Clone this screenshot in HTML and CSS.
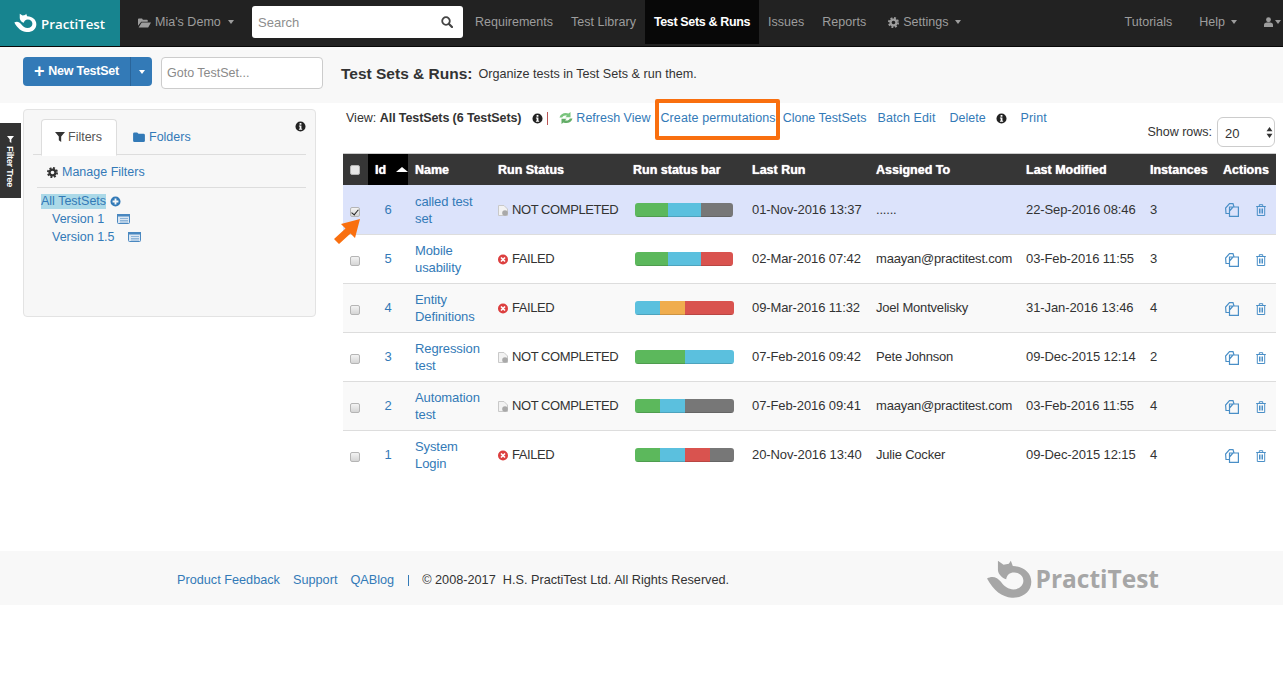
FILE: index.html
```html
<!DOCTYPE html>
<html lang="en">
<head>
<meta charset="utf-8">
<title>Test Sets &amp; Runs</title>
<link rel="stylesheet" href="styles.css">
</head>
<body>
<svg class="defs" aria-hidden="true">
  <symbol id="i-logo" viewBox="78 42 140 118"><path fill="currentColor" fill-rule="evenodd" d="M113 44 L130 56 L146 53 L152 44 L158 60 C192 62 214 82 214 108 C214 138 188 158 155 156 C125 154 100 135 80 98 C96 88 112 95 122 108 C132 122 145 131 160 131 C178 131 190 119 190 105 C190 90 178 80 162 80 C148 80 140 88 138 100 C126 96 114 86 113 72 Z"/></symbol>
  <symbol id="i-folder-open" viewBox="0 0 16 12"><path fill="currentColor" d="M0 2 a1 1 0 0 1 1-1 h4 l1 1.500 h5 a1 1 0 0 1 1 1 V5 H4 L0 10 Z M4.500 6 H16 L12.500 12 H.8 Z"/></symbol>
  <symbol id="i-folder" viewBox="0 0 13 11"><path fill="currentColor" d="M0 2 a1.500 1.500 0 0 1 1.500-1.500 h3 l1.500 1.500 h5.500 a1.500 1.500 0 0 1 1.500 1.500 v6 a1.500 1.500 0 0 1-1.500 1.500 h-10 a1.500 1.500 0 0 1-1.500-1.500 Z"/></symbol>
  <symbol id="i-search" viewBox="0 0 12 12"><circle cx="5" cy="5" r="3.800" fill="none" stroke="currentColor" stroke-width="1.800"/><path d="M8 8 L11 11" stroke="currentColor" stroke-width="2.200" stroke-linecap="round"/></symbol>
  <symbol id="i-gear" viewBox="0 0 12 12"><circle cx="6" cy="6" r="3.200" fill="none" stroke="currentColor" stroke-width="2.400"/><circle cx="6" cy="6" r="5" fill="none" stroke="currentColor" stroke-width="2" stroke-dasharray="2.100 1.827"/></symbol>
  <symbol id="i-funnel" viewBox="0 0 11 11"><path fill="currentColor" d="M0 0 H11 L6.800 5 V11 L4.200 9 V5 Z"/></symbol>
  <symbol id="i-info" viewBox="0 0 12 12"><path fill="currentColor" fill-rule="evenodd" d="M6 .5 a5.500 5.500 0 1 0 0 11 a5.500 5.500 0 1 0 0-11 Z M5 2.300 h2 v1.700 h-2 Z M4.300 5 h2.700 v3.400 h.8 v1.100 h-3.500 v-1.100 h.8 v-2.300 h-.8 Z"/></symbol>
  <symbol id="i-plus-circle" viewBox="0 0 12 12"><path fill="currentColor" fill-rule="evenodd" d="M6 .5 a5.500 5.500 0 1 0 0 11 a5.500 5.500 0 1 0 0-11 Z M5 2.800 h2 v2.200 h2.200 v2 h-2.200 v2.200 h-2 v-2.200 h-2.200 v-2 h2.200 Z"/></symbol>
  <symbol id="i-user" viewBox="0 0 10 12"><circle cx="5" cy="3" r="2.700" fill="currentColor"/><path fill="currentColor" d="M0 11 V8.500 C0 7 1.500 6.300 3 6 H7 C8.500 6.300 10 7 10 8.500 V11 Z"/></symbol>
  <symbol id="i-list" viewBox="0 0 13 10"><rect x=".5" y=".5" width="12" height="9" rx="1" fill="#dbe7f3" stroke="currentColor"/><rect x="0" y="0" width="13" height="2.500" fill="currentColor"/><path d="M3 4.500 H11 M3 6.500 H11 M3 8 H11" stroke="#8db4d8"/></symbol>
  <symbol id="i-refresh" viewBox="0 0 14 12"><path fill="#79c47d" d="M.5 5.500 C1.500 1.500 6 0 9.500 1.500 L11.500 0 V5.200 H6.300 L8 3.800 C6 3 4 3.500 3.200 5.500 Z"/><path fill="#63ad67" d="M13.500 6.500 C12.500 10.500 8 12 4.500 10.500 L2.500 12 V6.800 H7.700 L6 8.200 C8 9 10 8.500 10.800 6.500 Z"/></symbol>
  <symbol id="i-doc" viewBox="0 0 10 11"><path d="M.5 .5 H6 L9.500 4 V10.500 H.5 Z" fill="#f2f2f2" stroke="#c9c9c9"/><circle cx="7" cy="8" r="2.800" fill="#a9a9a9"/></symbol>
  <symbol id="i-fail" viewBox="0 0 10 10"><circle cx="5" cy="5" r="5" fill="#dc3f3f"/><path d="M3 3 L7 7 M7 3 L3 7" stroke="#fff" stroke-width="1.700"/></symbol>
  <symbol id="i-copy" viewBox="0 0 14 14"><path fill="none" stroke="currentColor" stroke-width="1.200" d="M4.500 10.500 H1 L.6 5 L4.500 .6 H8 L9 4 M4.500 13.400 V4 H13.400 V13.400 Z M4.500 8 L8 4"/></symbol>
  <symbol id="i-trash" viewBox="0 0 10 12"><path fill="none" stroke="currentColor" d="M.2 2.500 H9.800 M3.300 2.500 V.7 H6.700 V2.500 M1.300 2.500 V11.500 H8.700 V2.500 M3.500 4.500 V9.500 M5 4.500 V9.500 M6.500 4.500 V9.500"/></symbol>
  <symbol id="i-arrow" viewBox="0 0 26 25"><path fill="#f96f0f" d="M26 0 L21 19 L16.500 14.500 L5 25 L0 20 L11.500 9.500 L7 5 Z"/></symbol>
  <symbol id="i-updown" viewBox="0 0 7 13"><path fill="#333" d="M3.500 0 L7 5 H0 Z M0 8 H7 L3.500 13 Z"/></symbol>
</svg>

<header class="topnav">
  <a class="brand"><svg class="brand-mark"><use href="#i-logo"/></svg><span class="brand-text">PractiTest</span></a>
  <a class="nav-link project"><svg class="ic ic-fold"><use href="#i-folder-open"/></svg>Mia's Demo<span class="caret"></span></a>
  <div class="nav-search"><span class="search-ph">Search</span><svg class="ic ic-search"><use href="#i-search"/></svg></div>
  <nav class="nav-main">
    <a class="nav-link">Requirements</a>
    <a class="nav-link">Test Library</a>
    <a class="nav-link active">Test Sets &amp; Runs</a>
    <a class="nav-link">Issues</a>
    <a class="nav-link">Reports</a>
    <a class="nav-link settings"><svg class="ic ic-gear"><use href="#i-gear"/></svg>Settings<span class="caret"></span></a>
  </nav>
  <nav class="nav-right">
    <a class="nav-link">Tutorials</a>
    <a class="nav-link help">Help<span class="caret"></span></a>
    <a class="nav-link user"><svg class="ic ic-user"><use href="#i-user"/></svg><span class="caret"></span></a>
  </nav>
</header>

<section class="subbar">
  <div class="btn-group">
    <a class="btn-main"><span class="btn-plus">+</span>New TestSet</a>
    <a class="btn-drop"><span class="caret"></span></a>
  </div>
  <div class="goto">Goto TestSet...</div>
  <h1 class="page-title">Test Sets &amp; Runs:</h1>
  <p class="page-sub">Organize tests in Test Sets &amp; run them.</p>
</section>

<aside class="filter-tab"><svg class="ic ic-tabfunnel"><use href="#i-funnel"/></svg><span class="filter-tab-text">Filter Tree</span></aside>

<main class="main">
  <aside class="sidebar">
    <svg class="ic ic-info side-info"><use href="#i-info"/></svg>
    <div class="tabs">
      <a class="tab tab-active"><svg class="ic ic-funnel"><use href="#i-funnel"/></svg>Filters</a>
      <a class="tab"><svg class="ic ic-folder"><use href="#i-folder"/></svg>Folders</a>
    </div>
    <div class="manage"><svg class="ic ic-managegear"><use href="#i-gear"/></svg><a class="link">Manage Filters</a></div>
    <ul class="tree">
      <li class="tree-root"><a class="link tree-sel">All TestSets</a><svg class="ic ic-plus"><use href="#i-plus-circle"/></svg></li>
      <li class="tree-item"><a class="link">Version 1</a><svg class="ic ic-list"><use href="#i-list"/></svg></li>
      <li class="tree-item"><a class="link">Version 1.5</a><svg class="ic ic-list"><use href="#i-list"/></svg></li>
    </ul>
  </aside>

  <section class="content">
    <div class="toolbar">
      <div class="actions">
        <span class="view">View: <b>All TestSets (6 TestSets)</b></span>
        <svg class="ic ic-info view-info"><use href="#i-info"/></svg>
        <span class="pipe"></span>
        <svg class="ic ic-refresh"><use href="#i-refresh"/></svg>
        <a class="link refresh">Refresh View</a>
        <a class="link perm">Create permutations</a>
        <a class="link clone">Clone TestSets</a>
        <a class="link batch">Batch Edit</a>
        <a class="link del">Delete</a>
        <svg class="ic ic-info del-info"><use href="#i-info"/></svg>
        <a class="link print">Print</a>
      </div>
      <div class="rows">
        <span>Show rows:</span>
        <div class="rows-select">20<svg class="ic ic-updown"><use href="#i-updown"/></svg></div>
      </div>
    </div>

    <table class="grid">
      <colgroup>
        <col class="c-check"><col class="c-id"><col class="c-name"><col class="c-status"><col class="c-bar"><col class="c-run"><col class="c-assign"><col class="c-mod"><col class="c-inst"><col class="c-act">
      </colgroup>
      <thead>
        <tr>
          <th class="cell-check"><input class="check" type="checkbox"></th>
          <th class="th-sort">Id<span class="sort-up"></span></th>
          <th>Name</th><th>Run Status</th><th>Run status bar</th><th>Last Run</th><th>Assigned To</th><th>Last Modified</th><th>Instances</th><th>Actions</th>
        </tr>
      </thead>
      <tbody>
        <tr class="selected">
          <td class="cell-check"><input class="check" type="checkbox" checked><svg class="row-arrow"><use href="#i-arrow"/></svg></td>
          <td class="cell-id"><a class="link">6</a></td>
          <td class="cell-name"><a class="link">called test<br>set</a></td>
          <td><svg class="ic ic-status"><use href="#i-doc"/></svg><span class="st">NOT COMPLETED</span></td>
          <td><div class="bar w98"><i class="g s33"></i><i class="b s33"></i><i class="k s32"></i></div></td>
          <td>01-Nov-2016 13:37</td><td class="assignee">......</td><td>22-Sep-2016 08:46</td><td>3</td>
          <td class="cell-act"><svg class="ic ic-copy"><use href="#i-copy"/></svg><svg class="ic ic-trash"><use href="#i-trash"/></svg></td>
        </tr>
        <tr>
          <td class="cell-check"><input class="check" type="checkbox"></td>
          <td class="cell-id"><a class="link">5</a></td>
          <td class="cell-name"><a class="link">Mobile<br>usability</a></td>
          <td><svg class="ic ic-status"><use href="#i-fail"/></svg><span class="st">FAILED</span></td>
          <td><div class="bar w98"><i class="g s33"></i><i class="b s33"></i><i class="r s32"></i></div></td>
          <td>02-Mar-2016 07:42</td><td class="assignee">maayan@practitest.com</td><td>03-Feb-2016 11:55</td><td>3</td>
          <td class="cell-act"><svg class="ic ic-copy"><use href="#i-copy"/></svg><svg class="ic ic-trash"><use href="#i-trash"/></svg></td>
        </tr>
        <tr class="alt">
          <td class="cell-check"><input class="check" type="checkbox"></td>
          <td class="cell-id"><a class="link">4</a></td>
          <td class="cell-name"><a class="link">Entity<br>Definitions</a></td>
          <td><svg class="ic ic-status"><use href="#i-fail"/></svg><span class="st">FAILED</span></td>
          <td><div class="bar"><i class="b s25"></i><i class="o s25"></i><i class="r s49"></i></div></td>
          <td>09-Mar-2016 11:32</td><td class="assignee">Joel Montvelisky</td><td>31-Jan-2016 13:46</td><td>4</td>
          <td class="cell-act"><svg class="ic ic-copy"><use href="#i-copy"/></svg><svg class="ic ic-trash"><use href="#i-trash"/></svg></td>
        </tr>
        <tr>
          <td class="cell-check"><input class="check" type="checkbox"></td>
          <td class="cell-id"><a class="link">3</a></td>
          <td class="cell-name"><a class="link">Regression<br>test</a></td>
          <td><svg class="ic ic-status"><use href="#i-doc"/></svg><span class="st">NOT COMPLETED</span></td>
          <td><div class="bar"><i class="g s50"></i><i class="b s49"></i></div></td>
          <td>07-Feb-2016 09:42</td><td class="assignee">Pete Johnson</td><td>09-Dec-2015 12:14</td><td>2</td>
          <td class="cell-act"><svg class="ic ic-copy"><use href="#i-copy"/></svg><svg class="ic ic-trash"><use href="#i-trash"/></svg></td>
        </tr>
        <tr class="alt">
          <td class="cell-check"><input class="check" type="checkbox"></td>
          <td class="cell-id"><a class="link">2</a></td>
          <td class="cell-name"><a class="link">Automation<br>test</a></td>
          <td><svg class="ic ic-status"><use href="#i-doc"/></svg><span class="st">NOT COMPLETED</span></td>
          <td><div class="bar"><i class="g s25"></i><i class="b s25"></i><i class="k s49"></i></div></td>
          <td>07-Feb-2016 09:41</td><td class="assignee">maayan@practitest.com</td><td>03-Feb-2016 11:55</td><td>4</td>
          <td class="cell-act"><svg class="ic ic-copy"><use href="#i-copy"/></svg><svg class="ic ic-trash"><use href="#i-trash"/></svg></td>
        </tr>
        <tr>
          <td class="cell-check"><input class="check" type="checkbox"></td>
          <td class="cell-id"><a class="link">1</a></td>
          <td class="cell-name"><a class="link">System<br>Login</a></td>
          <td><svg class="ic ic-status"><use href="#i-fail"/></svg><span class="st">FAILED</span></td>
          <td><div class="bar"><i class="g s25"></i><i class="b s25"></i><i class="r s25"></i><i class="k s24"></i></div></td>
          <td>20-Nov-2016 13:40</td><td class="assignee">Julie Cocker</td><td>09-Dec-2015 12:15</td><td>4</td>
          <td class="cell-act"><svg class="ic ic-copy"><use href="#i-copy"/></svg><svg class="ic ic-trash"><use href="#i-trash"/></svg></td>
        </tr>
      </tbody>
    </table>
  </section>
</main>

<footer class="footer">
  <a class="link foot-link">Product Feedback</a>
  <a class="link foot-link">Support</a>
  <a class="link foot-link">QABlog</a>
  <span class="foot-sep"></span>
  <span class="foot-copy">© 2008-2017&nbsp; H.S. PractiTest Ltd. All Rights Reserved.</span>
  <div class="foot-logo"><svg class="foot-mark"><use href="#i-logo"/></svg><span class="foot-text">PractiTest</span></div>
</footer>
</body>
</html>
```

FILE: styles.css
```css
* { box-sizing: border-box; }
html, body { margin: 0; padding: 0; }
body {
  background: #fff;
  color: #333;
  font: 13px/17px "Liberation Sans", Arial, sans-serif;
  position: relative;
}
a { text-decoration: none; }
ul { list-style: none; margin: 0; padding: 0; }
h1, p { margin: 0; }
.defs { position: absolute; width: 0; height: 0; overflow: hidden; }
.ic { display: inline-block; flex: none; }
.link { color: #337ab7; }

.caret {
  display: inline-block;
  width: 0; height: 0;
  margin-left: 6px;
  vertical-align: middle;
  border-top: 4px solid currentColor;
  border-left: 3.500px solid transparent;
  border-right: 3.500px solid transparent;
}

/* top navigation */
.topnav {
  display: flex;
  align-items: stretch;
  height: 47px;
  background: #222;
  border-bottom: 1px solid #080808;
}
.brand {
  display: flex;
  align-items: center;
  width: 120px;
  padding-left: 14px;
  background: #17848f;
  color: #fff;
}
.brand-mark { width: 23px; height: 20px; color: #fff; }
.brand-text { margin-left: 4px; padding-top: 1px; font: 600 13.300px/20px "Open Sans", sans-serif; }
.nav-link {
  display: flex;
  align-items: center;
  height: 44px;
  padding: 0 9px;
  color: #9d9d9d;
  font-size: 12.500px;
  letter-spacing: .02px;
  white-space: nowrap;
}
.nav-link.active { background: #080808; color: #fff; font-weight: 700; letter-spacing: -.36px; }
.project { margin-left: 9px; width: 123px; }
.project .caret { margin-left: 7px; }
.ic-fold { width: 13px; height: 11px; margin-right: 4px; color: #9d9d9d; }
.nav-search {
  display: flex;
  align-items: center;
  justify-content: space-between;
  width: 211px;
  height: 32px;
  margin-top: 6px;
  padding: 0 10px 0 6px;
  background: #fff;
  border-radius: 3px;
  color: #8d8d8d;
}
.ic-search { width: 12px; height: 12px; color: #444; }
.nav-main { display: flex; margin-left: 3px; }
.settings { margin-left: 4px; }
.ic-gear { width: 11px; height: 11px; margin-right: 4px; }
.nav-right { display: flex; margin-left: auto; }
.help { margin-left: 9px; padding-right: 10px; }
.user { margin-left: 8px; padding-right: 0; width: 28px; }
.ic-user { width: 9px; height: 11px; color: #9d9d9d; }
.user .caret { margin-left: 2px; }

/* sub bar */
.subbar {
  display: flex;
  align-items: flex-start;
  height: 56px;
  padding: 10px 0 0 23px;
  background: #f8f8f8;
}
.btn-group { display: flex; height: 29px; }
.btn-main {
  display: flex;
  align-items: center;
  width: 107px;
  padding-left: 11px;
  background: #337ab7;
  color: #fff;
  border-radius: 4px 0 0 4px;
  white-space: nowrap;
  font-weight: 700;
  letter-spacing: -.25px;
  font-size: 12.500px;
}
.btn-plus { font-size: 18px; margin-right: 4px; }
.btn-drop {
  display: flex;
  align-items: center;
  justify-content: center;
  width: 22px;
  background: #337ab7;
  color: #fff;
  border-left: 1px solid #2a659a;
  border-radius: 0 4px 4px 0;
}
.btn-drop .caret { margin-left: 0; }
.goto {
  width: 162px;
  height: 32px;
  margin-left: 9px;
  padding: 7px 5px;
  background: #fff;
  border: 1px solid #ccc;
  border-radius: 4px;
  color: #8a8a8a;
  font-size: 12.500px;
}
.page-title { margin: 8px 0 0 18px; font-size: 15.500px; line-height: 18px; font-weight: 700; color: #333; }
.page-sub { margin: 9px 0 0 6px; font-size: 12.600px; }

/* left tab */
.filter-tab {
  position: absolute;
  left: 0;
  top: 123px;
  display: flex;
  flex-direction: column;
  align-items: center;
  width: 21px;
  height: 75px;
  padding-top: 13px;
  background: #333;
  color: #fff;
}
.ic-tabfunnel { width: 9px; height: 7px; }
.filter-tab-text {
  writing-mode: vertical-rl;
  font-size: 9.500px;
  line-height: 11px;
  font-weight: 700;
  margin-top: 3px;
  letter-spacing: -.4px;
}

/* main */
.main { display: flex; align-items: flex-start; padding-left: 23px; }
.sidebar {
  position: relative;
  width: 293px;
  height: 208px;
  margin-top: 6px;
  padding: 9px 9px 0;
  background: #f7f7f7;
  border: 1px solid #e3e3e3;
  border-radius: 4px;
  font-size: 12.500px;
}
.side-info { position: absolute; right: 9px; top: 11px; width: 11px; height: 11px; color: #222; }
.ic-info { width: 11px; height: 11px; color: #222; }
.tabs { display: flex; height: 36px; padding-left: 8px; border-bottom: 1px solid #ddd; }
.tab {
  display: flex;
  align-items: center;
  height: 37px;
  padding: 0 16px 1px 13px;
  color: #337ab7;
  white-space: nowrap;
}
.tab-active {
  width: 76px;
  background: #fff;
  color: #555;
  border: 1px solid #ddd;
  border-bottom-color: #fff;
  border-radius: 4px 4px 0 0;
}
.tab:not(.tab-active) { padding-left: 16px; }
.ic-funnel { width: 10px; height: 10px; margin-right: 3px; color: #333; }
.ic-folder { width: 12px; height: 10px; margin-right: 4px; color: #337ab7; }
.manage {
  display: flex;
  align-items: center;
  height: 33px;
  margin-left: 4px;
  padding: 3px 0 0 10px;
  border-bottom: 1px solid #ddd;
}
.ic-managegear { width: 11px; height: 11px; margin-right: 4px; color: #333; }
.tree { padding: 5px 0 0 8px; }
.tree-root { display: flex; align-items: center; height: 16px; }
.tree-sel { background: #abd9e8; line-height: 15px; }
.ic-plus { width: 11px; height: 11px; margin-left: 4px; color: #337ab7; }
.tree-item { display: flex; align-items: center; height: 18px; padding-left: 11px; margin-top: 1px; }
.tree-item + .tree-item { margin-top: 0; }
.ic-list { width: 13px; height: 10px; margin-left: 13px; color: #4a88c0; }

.content { width: 933px; margin-left: 27px; }
.toolbar { display: flex; height: 50px; position: relative; background: #fff; font-size: 12.500px; }
.actions { display: flex; align-items: center; height: 30px; white-space: nowrap; }
.view { margin-left: 3px; color: #333; }
.view b { letter-spacing: -.1px; }
.view-info { margin-left: 11px; }
.pipe { width: 1px; height: 13px; margin-left: 4px; background: #b55; }
.ic-refresh { width: 14px; height: 12px; margin-left: 11px; }
.refresh { margin-left: 3px; }
.perm { position: relative; margin-left: 10px; letter-spacing: .1px; }
.perm::after {
  content: "";
  position: absolute;
  left: -5px; right: -4px;
  top: -11px; bottom: -13px;
  border: 4px solid #f96f0f;
  border-radius: 2px;
}
.clone { margin-left: 7px; }
.batch { margin-left: 11px; letter-spacing: .1px; }
.del { margin-left: 14px; }
.del-info { margin-left: 10px; }
.print { margin-left: 14px; letter-spacing: .1px; }
.rows {
  display: flex;
  align-items: center;
  margin-left: auto;
  align-self: flex-end;
  margin-right: 1px;
  margin-bottom: 6px;
  gap: 5px;
}
.rows-select {
  position: relative;
  width: 58px;
  height: 30px;
  padding: 7px 7px;
  background: #fff;
  border: 1px solid #ccc;
  border-radius: 6px;
  font-size: 13px;
}
.ic-updown { position: absolute; right: 1px; top: 9px; width: 7px; height: 11px; }

/* table */
.grid { table-layout: fixed; width: 933px; border-collapse: separate; border-spacing: 0; }
.c-check { width: 25px; } .c-id { width: 40px; } .c-name { width: 83px; } .c-status { width: 135px; }
.c-bar { width: 119px; } .c-run { width: 124px; } .c-assign { width: 150px; } .c-mod { width: 124px; }
.c-inst { width: 73px; } .c-act { width: 60px; }
.grid th {
  height: 32px;
  padding: 2px 7px 0;
  background: #363636;
  border-top: 1px solid #ccc;
  color: #fff;
  text-align: left;
  font-size: 12.500px;
  white-space: nowrap;
  text-shadow: 0 0 1px #fff;
}
.grid th.th-sort { background: #000; position: relative; }
.sort-up {
  position: absolute;
  right: 0;
  top: 13px;
  border-bottom: 5px solid #fff;
  border-left: 6px solid transparent;
  border-right: 6px solid transparent;
}
.grid td {
  height: 49px;
  padding: 0 7px 1px;
  border-top: 1px solid #ddd;
  white-space: nowrap;
  vertical-align: middle;
  letter-spacing: -.1px;
}
.grid td.assignee { letter-spacing: -.2px; }
.grid tr.selected td { background: #dce3fb; border-top: 0; }
.grid tr.selected td.cell-name { padding-top: 2px; }
.grid tr.alt td { background: #f9f9f9; }
.grid .cell-check { padding: 0; text-align: center; position: relative; }
.cell-id { text-align: center; }
.check {
  appearance: none;
  -webkit-appearance: none;
  position: relative;
  display: inline-block;
  width: 10px;
  height: 10px;
  margin: 2px 1px 0 0;
  background: linear-gradient(#f3f3f3, #d5d5d5);
  border: 1px solid #b5b5b5;
  border-radius: 2px;
  vertical-align: middle;
}
.check:checked::after {
  content: "";
  position: absolute;
  left: 2px;
  top: 0;
  width: 3px;
  height: 6px;
  border: solid #222;
  border-width: 0 1.500px 1.500px 0;
  transform: rotate(40deg);
}
th .check { margin-top: 0; background: #e6e6e6; }
.row-arrow { position: absolute; left: -9px; top: 34px; width: 26px; height: 25px; z-index: 2; }
.ic-status { width: 10px; height: 11px; margin-right: 4px; vertical-align: -2px; }
.grid td .st { letter-spacing: -.43px; }
.bar {
  display: flex;
  width: 99px;
  height: 14px;
  margin: 1px 0 0 2px;
  border-radius: 3px;
  overflow: hidden;
}
.bar.w98 { width: 98px; }
.bar i { display: block; height: 14px; box-shadow: inset 0 -1px 0 rgba(0,0,0,.15); }
.bar .g { background: #5cb85c; }
.bar .b { background: #5bc0de; }
.bar .k { background: #777; }
.bar .r { background: #d9534f; }
.bar .o { background: #f0ad4e; }
.s24 { width: 24px; } .s25 { width: 25px; } .s32 { width: 32px; } .s33 { width: 33px; } .s49 { width: 49px; } .s50 { width: 50px; }
.grid .cell-act { padding-left: 9px; }
.ic-copy { width: 14px; height: 14px; color: #4a8fc7; vertical-align: middle; }
.ic-trash { width: 10px; height: 12px; margin-left: 17px; color: #4a8fc7; vertical-align: middle; }

/* footer */
.footer {
  display: flex;
  align-items: center;
  height: 54px;
  margin-top: 72px;
  padding: 4px 0 0 177px;
  background: #f8f8f8;
  font-size: 12.700px;
}
.foot-link { margin-right: 13px; }
.foot-sep { width: 1px; height: 11px; margin: 0 13px 0 1px; background: #337ab7; }
.foot-logo { display: flex; align-items: center; margin: -2px 124px 0 auto; color: #a6a6a6; }
.foot-mark { width: 47px; height: 39px; }
.foot-text { margin-left: 3px; font: 700 24.500px/32px "Open Sans", sans-serif; }
```
